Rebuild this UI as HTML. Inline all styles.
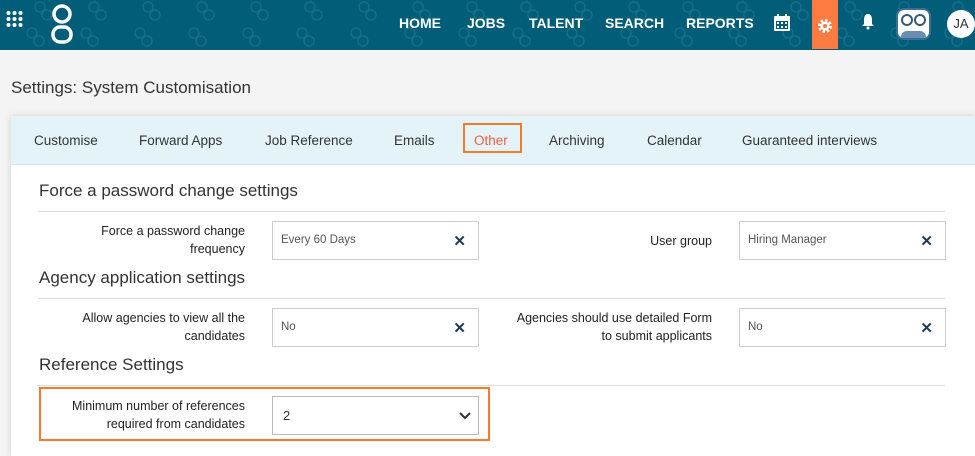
<!DOCTYPE html>
<html><head><style>
*{box-sizing:border-box;margin:0;padding:0}
body{width:975px;height:449px;overflow:hidden;background:#f4f4f4;font-family:"Liberation Sans",sans-serif;position:relative}
.hdr{position:absolute;left:0;top:0;width:975px;height:50px;background:#025e78}
.nav{position:absolute;top:15px;color:#fff;font-weight:bold;font-size:14px}
.title{position:absolute;left:11px;top:78px;font-size:17px;color:#333}
.card{position:absolute;left:11px;top:116px;width:964px;height:340px;background:#fff;box-shadow:0 0 6px rgba(0,0,0,.15)}
.tabs{position:absolute;left:0;top:0;width:100%;height:49px;background:#e3f3f8;border-bottom:1px solid #d6e6ea}
.tab{position:absolute;top:17px;font-size:13.5px;color:#333}
.a{position:absolute}
.h{position:absolute;left:28px;font-size:17px;color:#333}
.ln{position:absolute;left:27px;width:907px;height:1px;background:#ddd}
.lb{position:absolute;font-size:12.5px;color:#222;text-align:right;line-height:18px}
.in{position:absolute;width:207px;height:39px;border:1px solid #ccc;background:#fff;font-size:11.5px;color:#555;padding:12px 8px}
.in b{position:absolute;right:12px;top:10px;font-size:15px;color:#1f3a50}
</style></head><body>
<div class="hdr">
<svg width="975" height="50" style="position:absolute;left:0;top:0" fill="none" stroke="#1a7189" stroke-width="1.3">
<g id="c"><circle cx="40" cy="7" r="5"/><circle cx="47" cy="15" r="5"/><circle cx="32" cy="33" r="5"/><circle cx="39" cy="41" r="5"/></g>
<use href="#c" x="54"/><use href="#c" x="108"/><use href="#c" x="162"/><use href="#c" x="216"/><use href="#c" x="270"/><use href="#c" x="324"/><use href="#c" x="378"/><use href="#c" x="432"/><use href="#c" x="486"/><use href="#c" x="540"/><use href="#c" x="594"/><use href="#c" x="648"/><use href="#c" x="702"/><use href="#c" x="756"/><use href="#c" x="810"/><use href="#c" x="864"/><use href="#c" x="918"/>
</svg>
<svg width="20" height="20" style="position:absolute;left:6px;top:10px" fill="#fff"><circle cx="2.5" cy="3" r="2"/><circle cx="8.5" cy="3" r="2"/><circle cx="14.5" cy="3" r="2"/><circle cx="2.5" cy="9" r="2"/><circle cx="8.5" cy="9" r="2"/><circle cx="14.5" cy="9" r="2"/><circle cx="2.5" cy="15" r="2"/><circle cx="8.5" cy="15" r="2"/><circle cx="14.5" cy="15" r="2"/></svg>
<svg width="26" height="44" style="position:absolute;left:50px;top:2px" fill="none" stroke="#fff" stroke-width="3.5"><circle cx="12" cy="12" r="8"/><rect x="3" y="25" width="18" height="15" rx="7"/></svg>
<span class="nav" style="left:399px">HOME</span><span class="nav" style="left:467px">JOBS</span><span class="nav" style="left:529px">TALENT</span><span class="nav" style="left:605px">SEARCH</span><span class="nav" style="left:686px">REPORTS</span>
<svg width="18" height="18" style="position:absolute;left:773px;top:14px" fill="#fff"><rect x="1" y="2" width="16" height="15" rx="1"/><rect x="4" y="0" width="2" height="4"/><rect x="12" y="0" width="2" height="4"/><rect x="3" y="7" width="12" height="8" fill="#025e78"/><rect x="4" y="8" width="2" height="2"/><rect x="8" y="8" width="2" height="2"/><rect x="12" y="8" width="2" height="2"/><rect x="4" y="12" width="2" height="2"/><rect x="8" y="12" width="2" height="2"/><rect x="12" y="12" width="2" height="2"/></svg>
<div style="position:absolute;left:812px;top:0;width:26px;height:49px;background:#fd7b40"></div>
<svg width="16" height="16" viewBox="0 0 16 16" style="position:absolute;left:817px;top:18px"><circle cx="8" cy="8" r="5" fill="none" stroke="#fff" stroke-width="4" stroke-dasharray="2.2 1.7"/><circle cx="8" cy="8" r="4.5" fill="#fff"/><circle cx="8" cy="8" r="2" fill="#fd7b40"/></svg>
<svg width="14" height="17" style="position:absolute;left:861px;top:13px" fill="#fff"><path d="M7 1C4 1 3 4 3 7v4L1 13h12l-2-2V7c0-3-1-6-4-6z"/><circle cx="7" cy="15" r="1.5"/></svg>
<div style="position:absolute;left:896px;top:8px;width:35px;height:32px;border-radius:8px;background:#fff;border:2px solid #3a6f92;overflow:hidden"><div style="position:absolute;left:3px;top:4px;width:12px;height:12px;border-radius:50%;border:2px solid #375a78"></div><div style="position:absolute;left:16px;top:4px;width:12px;height:12px;border-radius:50%;border:2px solid #375a78"></div><div style="position:absolute;left:3px;top:21px;width:25px;height:10px;background:#6a8fae;border-radius:6px 6px 0 0"></div></div>
<div style="position:absolute;left:947px;top:10px;width:28px;height:28px;border-radius:50%;background:#fff;color:#333;font-size:13px;line-height:28px;text-align:center">JA</div>
</div>
<div class="title">Settings: System Customisation</div>
<div class="card">
<div class="tabs">
<span class="tab" style="left:23px">Customise</span><span class="tab" style="left:128px">Forward Apps</span><span class="tab" style="left:254px">Job Reference</span><span class="tab" style="left:383px">Emails</span>
<div class="a" style="left:452px;top:7px;width:59px;height:30px;border:2px solid #f47b2b"></div><span class="tab" style="left:463px;color:#f0603e">Other</span>
<span class="tab" style="left:538px">Archiving</span><span class="tab" style="left:636px">Calendar</span><span class="tab" style="left:731px">Guaranteed interviews</span>
</div>
<div class="h" style="top:65px">Force a password change settings</div><div class="ln" style="top:95px"></div>
<div class="lb" style="right:730px;top:106px">Force a password change<br>frequency</div>
<div class="in" style="left:261px;top:105px">Every 60 Days<b>✕</b></div>
<div class="lb" style="right:263px;top:116px">User group</div>
<div class="in" style="left:728px;top:105px">Hiring Manager<b>✕</b></div>
<div class="h" style="top:152px">Agency application settings</div><div class="ln" style="top:182px"></div>
<div class="lb" style="right:730px;top:193px">Allow agencies to view all the<br>candidates</div>
<div class="in" style="left:261px;top:192px">No<b>✕</b></div>
<div class="lb" style="right:263px;top:193px">Agencies should use detailed Form<br>to submit applicants</div>
<div class="in" style="left:728px;top:192px">No<b>✕</b></div>
<div class="h" style="top:239px">Reference Settings</div><div class="ln" style="top:269px"></div>
<div class="a" style="left:28px;top:271px;width:451px;height:54px;border:2px solid #f47b2b"></div>
<div class="lb" style="right:730px;top:281px">Minimum number of references<br>required from candidates</div>
<div class="in" style="left:261px;top:280px;border-color:#bbb;font-size:13px;color:#333;padding:11px 10px">2<svg width="12" height="8" style="position:absolute;right:7px;top:15px" fill="none" stroke="#333" stroke-width="2"><path d="M1 1l5 5 5-5"/></svg></div>
</div>
</body></html>
